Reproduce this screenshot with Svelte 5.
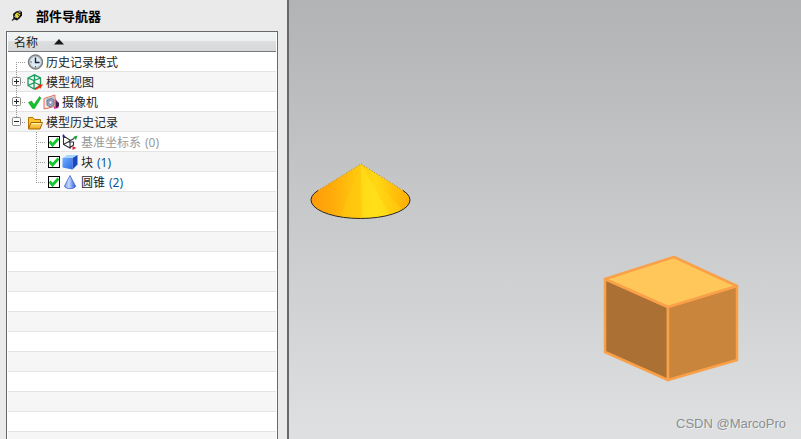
<script>
  let rows = $state([
    { label: '历史记录模式', icon: 'clock', line: 'first' },
    { label: '模型视图', icon: 'views', line: 'mid', open: false },
    { label: '摄像机', icon: 'camera', line: 'mid', open: false, tick: true },
    { label: '模型历史记录', icon: 'folder', line: 'last', open: true }
  ]);
  let features = $state([
    { label: '基准坐标系', count: '(0)', icon: 'csys', checked: true, dim: true },
    { label: '块', count: '(1)', icon: 'block', checked: true },
    { label: '圆锥', count: '(2)', icon: 'cone', checked: true }
  ]);
</script>

{#snippet icon(name)}
  <svg class="icon" width="16" height="16" viewBox="0 0 16 16" aria-hidden="true">
    {#if name === 'clock'}
      <circle cx="8.5" cy="8" r="7.2" fill="#8b8d90" stroke="#707376" />
      <circle cx="8.5" cy="8" r="5.8" fill="#dce9f6" stroke="#b9bcc0" />
      <path d="M8.5 3.5v5h4" fill="none" stroke="#20242c" stroke-width="1.4" />
      <path d="M8.5 12v1.5M3.5 8h1.5" stroke="#56606c" />
    {:else if name === 'views'}
      <path d="M1 4L7.500 .8l6 3v7.700L7 15l-6-3.500zM1 4L7 6.500L13.500 4M7 6.500v8M7.500 1v7.500L1 11.500M7.500 8.500L13 11" fill="none" stroke="#159a5b" stroke-width="1.3" />
      <path d="M8 15.500l5-3" stroke="#f03010" stroke-width="1.6" />
      <path d="M11 10.500h5l-3 4.500z" fill="#f03010" />
    {:else if name === 'tick'}
      <path d="M1.500 8.500L4.500 7L7 10.500L12.500 2.500L14 4L7.500 14.500H5.500z" fill="#12c42c" stroke="#078c1d" stroke-width=".5" />
    {:else if name === 'camera'}
      <path d="M11 3l4.500 5.500v5.500l-4.500 1z" fill="#d43ab5" />
      <path d="M13 7l3 2v3l-3 2z" fill="#40204c" />
      <path d="M1 4.500L12 1v11.500l-11 2.500z" fill="#f7e6df" stroke="#e56d5a" />
      <path d="M3 4.500l8-2.500v3L3 8z" fill="#b3c8d3" />
      <path d="M4 6.500l4-2l3 1.500v5L7 13l-3-2z" fill="#9eafc8" stroke="#567" stroke-width=".8" />
      <circle cx="7.500" cy="8.500" r="1.800" fill="#e9f0fa" stroke="#846ba4" stroke-width=".8" />
    {:else if name === 'folder'}
      <path d="M1.500 14v-10.500h4.500l1.500 2h6v3" fill="#ffc62b" stroke="#b37300" />
      <path d="M1.500 15L4 8.500h11.500L13 15z" fill="url(#folder-front)" stroke="#a86600" />
      <path d="M5 9.500h9.500" stroke="#fff1b0" />
    {:else if name === 'csys'}
      <path d="M1.500 2v8.500L8 14v-8zM1.500 10.500L12 4.500M5.500 8h6v3l-4 3" fill="none" stroke="#30343a" stroke-width="1.1" />
      <path d="M0 2.500L1.500 0L3 2.500z" fill="#2426b8" />
      <path d="M11 3l4.500-1.500-1.500 4.500z" fill="#129a34" />
      <path d="M10.500 12l4 2-4 2z" fill="#e02732" />
    {:else if name === 'block'}
      <path d="M.5 4L5.500 1H15.500L10.500 4z" fill="#a6d3ff" />
      <path d="M.5 4h10v11.500l-10-2z" fill="url(#blue-face)" />
      <path d="M10.500 4l5-3v9.500l-5 5z" fill="#1748bd" />
    {:else if name === 'cone'}
      <path d="M8 1.500L2.500 12c0 3.500 11 3.500 11 0z" fill="url(#blue-cone)" stroke="#4169cf" stroke-width=".8" />
    {/if}
  </svg>
{/snippet}

<svg class="defs" width="0" height="0" aria-hidden="true">
  <defs>
    <linearGradient id="blue-cone">
      <stop offset="0" stop-color="#6f99f2" />
      <stop offset=".4" stop-color="#c5d8ff" />
      <stop offset="1" stop-color="#2f56d8" />
    </linearGradient>
    <linearGradient id="blue-face" x2="1" y2="1">
      <stop offset="0" stop-color="#72aeff" />
      <stop offset="1" stop-color="#2a66e6" />
    </linearGradient>
    <linearGradient id="folder-front" x2="0" y2="1">
      <stop offset="0" stop-color="#ffe37a" />
      <stop offset="1" stop-color="#efa71c" />
    </linearGradient>
    <linearGradient id="gold-cone">
      <stop offset="0" stop-color="#ff9a08" />
      <stop offset=".22" stop-color="#ffac0a" />
      <stop offset=".48" stop-color="#ffc90e" />
      <stop offset=".65" stop-color="#ffd814" />
      <stop offset=".8" stop-color="#ffc60c" />
      <stop offset="1" stop-color="#ffad05" />
    </linearGradient>
  </defs>
</svg>

<div class="app">
  <aside>
    <header>
      <svg width="12" height="12" viewBox="0 0 12 12" aria-hidden="true">
        <path d="M1 10.500L4 8" stroke="#333" stroke-width="1.500" />
        <path d="M2 4L5 1.500 9 .5l2 1.500v3.500L8.500 8.500 6 10.500 2.500 9z" fill="#111" />
        <path d="M3.500 5L6 2.500l3.500 2-3 4z" fill="#e8dd2d" />
        <path d="M3.500 6l2 2M7.500 2h2" stroke="#fffbd0" />
        <path d="M6.500 4.500l2 1.500" stroke="#222" />
      </svg>
      <h1>部件导航器</h1>
    </header>
    <div class="panel">
      <button class="column">
        <span>名称</span>
        <svg width="10" height="6" viewBox="0 0 10 6" aria-hidden="true"><path d="M0 5.500L5 0l5 5.500z" fill="#1b1b1b" /></svg>
      </button>
      <ul class="tree">
        {#each rows as row}
          <li class="row">
            <span class="guide {row.line}">
              {#if row.open !== undefined}
                <button class="toggle" aria-label={row.label} aria-expanded={row.open} onclick={() => (row.open = !row.open)}>
                  <svg width="9" height="9" viewBox="0 0 9 9" aria-hidden="true">
                    <rect x=".5" y=".5" width="8" height="8" rx="1" fill="#fafafa" stroke="#8b8b8b" />
                    <path d={row.open ? 'M2 4.500h5' : 'M2 4.500h5M4.500 2v5'} stroke="#222" />
                  </svg>
                </button>
              {/if}
            </span>
            {#if row.tick}{@render icon('tick')}{/if}
            {@render icon(row.icon)}
            <span class="label">{row.label}</span>
          </li>
        {/each}
        {#if rows[3].open}
          {#each features as item, i}
            <li class="row child">
              <span class="guide" class:last={i === 2}></span>
              <label>
                <input type="checkbox" bind:checked={item.checked} />
                {@render icon(item.icon)}
                <span class="label" class:dim={item.dim}>{item.label}<span class="count">{item.count}</span></span>
              </label>
            </li>
          {/each}
        {/if}
      </ul>
    </div>
  </aside>

  <main>
    <svg class="shape cone" width="102" height="58" viewBox="0 0 102 58" role="img" aria-label="圆锥">
      <path d="M51 1L8 27.500A49.500 18.500 0 1 0 93 27.500z" fill="url(#gold-cone)" />
      <path d="M51 1L30 54L42 55.500H52z" fill="#ffcc10" opacity=".4" />
      <path d="M51 1L52 55.500L80 52z" fill="#ffe41c" opacity=".6" />
      <path d="M51 1L80 52L92 47z" fill="#ffd814" opacity=".4" />
      <path d="M8 27.500L51 1L93 27.500" fill="none" stroke="#b98117" stroke-dasharray="1 2" />
      <path d="M8 27.500A49.500 18.500 0 1 0 93 27.500" fill="none" stroke="#2b2720" />
    </svg>
    <svg class="shape cube" width="136" height="128" viewBox="0 0 136 128" role="img" aria-label="块">
      <g stroke="#f9a048" stroke-width="2.500" stroke-linejoin="round">
        <path d="M2 24L65 52v73L2 97z" fill="#ab7033" />
        <path d="M65 52l69-21v74l-69 20z" fill="#c9853b" />
        <path d="M2 24L71 2l63 29-69 21z" fill="#ffc75a" />
      </g>
    </svg>
    <span class="watermark">CSDN @MarcoPro</span>
  </main>
</div>

<style>
  :global(body) { margin: 0; }
  .defs { position: absolute; }
  .app {
    display: flex;
    min-height: 100vh;
    font: 12px/18px "Noto Sans", "Noto Sans CJK SC", sans-serif;
    color: #222;
  }
  aside {
    display: flex;
    flex-direction: column;
    box-sizing: border-box;
    flex: 0 0 289px;
    padding: 0 9px 0 6px;
    background: #eaeaea;
    border-right: 2px solid #68696d;
  }
  header {
    display: flex;
    align-items: center;
    gap: 13px;
    height: 31px;
    padding-left: 5px;
  }
  h1 { margin: 0; font-size: 13px; font-weight: 700; color: #000; }
  .panel {
    display: flex;
    flex-direction: column;
    flex: 1;
    padding: 0 1px;
    border: 1px solid #68696c;
    border-bottom: 0;
    background: #fff;
  }
  .column {
    display: flex;
    align-items: center;
    gap: 16px;
    height: 20px;
    padding: 0 6px;
    border: 0;
    border-bottom: 1px solid #77787a;
    background: linear-gradient(#f2f4f4, #edf0f0 50%, #dcdedf 50%, #d6d8da);
    font: inherit;
    color: #222;
  }
  .column span { padding-top: 2px; }
  .tree {
    flex: 1;
    margin: 0;
    padding: 0;
    list-style: none;
    background: repeating-linear-gradient(#fff 0 19px, #e3e3e3 19px 20px, #f6f6f6 20px 39px, #e3e3e3 39px 40px);
  }
  .row, label { display: flex; align-items: center; height: 20px; }
  .icon { display: block; flex: none; }
  .label { padding: 2px 0 0 3px; white-space: nowrap; }
  .guide {
    position: relative;
    flex: none;
    width: 19px;
    height: 20px;
  }
  .guide::before, .guide::after { content: ""; position: absolute; left: 8px; }
  .guide::before {
    top: 0;
    width: 1px;
    height: 20px;
    background: repeating-linear-gradient(#999 0 1px, transparent 1px 2px);
  }
  .guide::after {
    top: 10px;
    width: 10px;
    height: 1px;
    background: repeating-linear-gradient(90deg, #999 0 1px, transparent 1px 2px);
  }
  .first::before { top: 10px; height: 10px; }
  .last::before { height: 10px; }
  .toggle {
    position: absolute;
    z-index: 1;
    top: 5px;
    left: 4px;
    display: block;
    padding: 0;
    border: 0;
    background: none;
    line-height: 0;
  }
  .child { padding-left: 20px; }
  .child .guide { width: 20px; }
  input {
    appearance: none;
    box-sizing: border-box;
    flex: none;
    width: 12px;
    height: 12px;
    margin: 0 2px 0 0;
    border: 1px solid #000;
    background: #fff;
  }
  input:checked {
    background: #fff url("data:image/svg+xml,%3Csvg xmlns='http://www.w3.org/2000/svg' viewBox='0 0 10 10'%3E%3Cpath d='M.5 4.500l3 3.500 6-6.500' fill='none' stroke='%2310c82a' stroke-width='2.800'/%3E%3C/svg%3E");
  }
  .count { padding-left: 4px; color: #075a9c; }
  .dim, .dim .count { color: #999; }
  main {
    position: relative;
    flex: 1;
    min-width: 0;
    overflow: hidden;
    background: linear-gradient(#b2b3b5, #dfe0e2);
  }
  .shape { position: absolute; }
  .cone { left: 21px; top: 163px; }
  .cube { left: 314px; top: 255px; }
  .watermark {
    position: absolute;
    right: 15px;
    bottom: 5px;
    font: 13px/20px "Liberation Sans", sans-serif;
    color: #8d8e90;
    text-shadow: 1px 1px 0 #eeeff0;
  }
</style>
